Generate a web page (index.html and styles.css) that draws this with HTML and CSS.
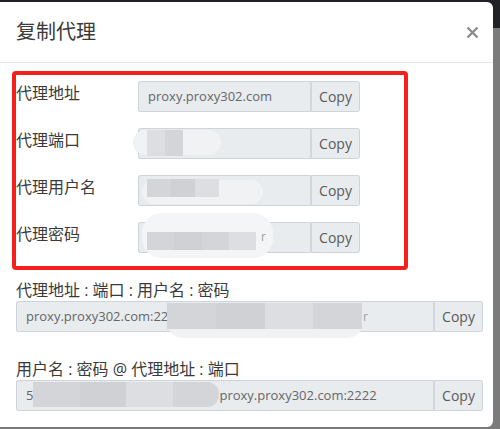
FILE: index.html
```html
<!DOCTYPE html>
<html>
<head>
<meta charset="utf-8">
<link rel="stylesheet" href="styles.css">
</head>
<body>
<div class="modal">
  <div class="header">
    <div class="title">复制代理</div>
    <svg class="close" width="13" height="13" viewBox="0 0 13 13"><path d="M1.5 1.5L11.5 11.5M11.5 1.5L1.5 11.5" stroke="#8c8c8c" stroke-width="2.4" stroke-linecap="butt"/></svg>
  </div>
  <div class="body">
    <div class="row">
      <div class="label">代理地址</div>
      <div class="field">proxy.proxy302.com</div>
      <div class="btn">Copy</div>
    </div>
    <div class="row">
      <div class="label">代理端口</div>
      <div class="field">
        <span class="smudge s-port"></span>
        <span class="mosaic m-port"><i class="t1"></i><i class="t2"></i></span>
      </div>
      <div class="btn">Copy</div>
    </div>
    <div class="row">
      <div class="label">代理用户名</div>
      <div class="field">
        <span class="smudge s-user"></span>
        <span class="mosaic m-user"><i class="t2"></i><i class="t3"></i><i class="t1"></i></span>
      </div>
      <div class="btn">Copy</div>
    </div>
    <div class="row last">
      <div class="label">代理密码</div>
      <div class="field">
        <span class="smudge s-pass"></span>
        <span class="mosaic m-pass"><i class="t2"></i><i class="t3"></i><i class="t2"></i><i class="t1"></i></span>
        <span class="ghost g-pass">r</span>
      </div>
      <div class="btn">Copy</div>
    </div>

    <div class="group-label">代理地址 : 端口 : 用户名 : 密码</div>
    <div class="wide">
      <div class="field">proxy.proxy302.com:22<span class="smudge s-b1"></span><span class="mosaic m-b1"><i class="t2"></i><i class="t3"></i><i class="t1"></i><i class="t2"></i></span><span class="ghost g-b1">r</span></div>
      <div class="btn">Copy</div>
    </div>

    <div class="group-label second">用户名 : 密码 @ 代理地址 : 端口</div>
    <div class="wide">
      <div class="field">5<span class="mosaic m-b2"><i class="t2"></i><i class="t3"></i><i class="t1"></i><i class="t2"></i></span>proxy.proxy302.com:2222</div>
      <div class="btn">Copy</div>
    </div>
  </div>
  <div class="annotation"></div>
</div>
</body>
</html>
```
FILE: styles.css
```css
html, body {
  margin: 0;
  padding: 0;
}
body {
  width: 500px;
  height: 429px;
  overflow: hidden;
  background: linear-gradient(#202225 0, #202225 28px, #7b7b7b 28px);
  font-family: "Open Sans", "Noto Sans CJK SC", sans-serif;
  color: #333;
}
.modal {
  position: relative;
  margin-top: 2px;
  width: 493px;
  height: 425px;
  background: #fff;
  border-radius: 0 6px 6px 0;
}
.header {
  height: 60px;
  border-bottom: 1px solid #e5e5e5;
  display: flex;
  align-items: center;
  justify-content: space-between;
  padding: 0 14px 0 16px;
}
.title {
  font-size: 20px;
  line-height: 28px;
  color: #3a3a3a;
}
.close {
  display: block;
  margin-top: 1px;
}
.body {
  padding: 18px 10px 0 16px;
}
.row {
  display: grid;
  grid-template-columns: 122px 172px 50px;
  height: 31px;
  margin-bottom: 16px;
}
.row.last {
  margin-bottom: 27px;
}
.label {
  font-size: 16px;
  line-height: 25px;
  color: #3a3a3a;
  white-space: nowrap;
}
.field {
  position: relative;
  box-sizing: border-box;
  height: 31px;
  background: #e9ecef;
  border: 1px solid #ced4da;
  border-right: none;
  border-radius: 3px 0 0 3px;
  padding: 0 9px;
  font-size: 13px;
  line-height: 29px;
  color: #666;
  white-space: nowrap;
}
.btn {
  box-sizing: border-box;
  height: 31px;
  background: #e9ecef;
  border: 1px solid #ced4da;
  border-left: 2px solid #d3d7db;
  border-radius: 0 3px 3px 0;
  font-size: 14px;
  line-height: 29px;
  text-align: center;
  color: #5a5a5a;
}
.group-label {
  font-size: 16px;
  line-height: 21px;
  color: #3a3a3a;
}
.group-label.second {
  margin-top: 27px;
}
.wide {
  display: grid;
  grid-template-columns: 417px 50px;
}

/* redaction marks */
.smudge {
  position: absolute;
  background: #f1f2f3;
  border-radius: 14px;
}
.mosaic {
  position: absolute;
  display: flex;
}
.mosaic i {
  flex: 1;
  display: block;
}
.t1 { background: #dcdee1; }
.t2 { background: #d3d5d8; }
.t3 { background: #cfd1d4; }
.ghost {
  position: absolute;
  color: #9a9ca0;
  font-size: 12px;
}
.s-port { left: -6px; top: 1px; width: 88px; height: 25px; }
.m-port { left: 8px; top: 1px; width: 36px; height: 26px; }
.s-user { left: 3px; top: 4px; width: 121px; height: 24px; }
.m-user { left: 8px; top: 3px; width: 72px; height: 18px; }
.s-pass { left: 3px; top: -10px; width: 131px; height: 45px; border-radius: 20px; background: #f4f5f6; }
.m-pass { left: 8px; top: 9px; width: 109px; height: 18px; }
.g-pass { left: 122px; top: -1px; }
.s-b1 { left: 150px; top: 2px; width: 196px; height: 34px; border-radius: 16px; }
.m-b1 { left: 150px; top: 1px; width: 195px; height: 26px; }
.g-b1 { left: 346px; top: 0; }
.m-b2 {
  position: static;
  display: inline-flex;
  vertical-align: top;
  margin-top: 1px;
  width: 186px;
  height: 25px;
  border-radius: 0 12px 12px 0;
  overflow: hidden;
}

.annotation {
  position: absolute;
  left: 12px;
  top: 69px;
  width: 396px;
  height: 199px;
  box-sizing: border-box;
  border: 4px solid #f5201b;
  border-radius: 4px;
  pointer-events: none;
}
```
